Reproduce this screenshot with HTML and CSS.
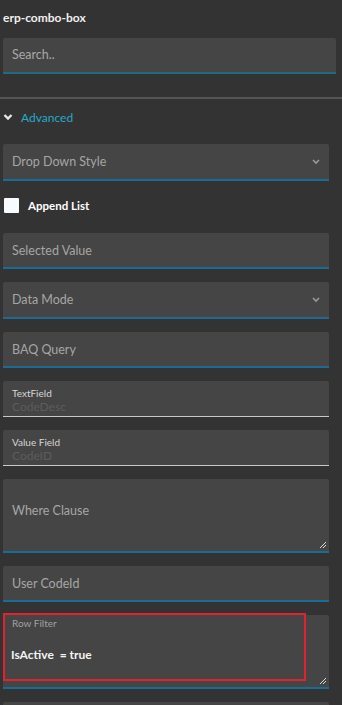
FILE: index.html
```html
<!DOCTYPE html>
<html lang="en">
<head>
    <meta charset="UTF-8">
    <meta name="viewport" content="width=device-width, initial-scale=1.0">
    <title>erp-combo-box</title>
    <link rel="stylesheet" href="styles.css">
</head>
<body>
    <div class="panel-head">
        <div class="panel-title">erp-combo-box</div>
        <div class="search-box">Search..</div>
    </div>
    <div class="divider"></div>

    <div class="section-toggle">
        <svg class="toggle-icon" width="10" height="8" viewBox="0 0 10 8">
            <path d="M1.5 2 L5 5.5 L8.5 2" fill="none" stroke="#e6e6e6" stroke-width="2.4"/>
        </svg>
        <span>Advanced</span>
    </div>

    <div class="props">
        <div class="field select">
            <span class="placeholder">Drop Down Style</span>
            <svg class="chevron" width="10" height="7" viewBox="0 0 10 7">
                <path d="M2 2 L5 5 L8 2" fill="none" stroke="#9a9a9a" stroke-width="1.6"/>
            </svg>
        </div>

        <label class="check-row">
            <span class="check-box"></span>
            <span class="check-label">Append List</span>
        </label>

        <div class="field-list">
            <div class="field"><span class="placeholder">Selected Value</span></div>
            <div class="field select">
                <span class="placeholder">Data Mode</span>
                <svg class="chevron" width="10" height="7" viewBox="0 0 10 7">
                    <path d="M2 2 L5 5 L8 2" fill="none" stroke="#9a9a9a" stroke-width="1.6"/>
                </svg>
            </div>
            <div class="field"><span class="placeholder">BAQ Query</span></div>
            <div class="field labeled">
                <span class="small-label">TextField</span>
                <span class="ghost">CodeDesc</span>
            </div>
            <div class="field labeled">
                <span class="small-label">Value Field</span>
                <span class="ghost">CodeID</span>
            </div>
            <div class="field area">
                <span class="placeholder">Where Clause</span>
                <svg class="grip" width="8" height="8" viewBox="0 0 8 8">
                    <path d="M7 1 L1 7 M7 4 L4 7" stroke="#d8d8d8" stroke-width="1"/>
                </svg>
            </div>
            <div class="field"><span class="placeholder">User CodeId</span></div>
            <div class="field area filled">
                <span class="small-label dim">Row Filter</span>
                <span class="value">IsActive &nbsp;= true</span>
                <svg class="grip" width="8" height="8" viewBox="0 0 8 8">
                    <path d="M7 1 L1 7 M7 4 L4 7" stroke="#d8d8d8" stroke-width="1"/>
                </svg>
                <div class="highlight"></div>
            </div>
            <div class="field"></div>
        </div>
    </div>
</body>
</html>
```

FILE: styles.css
```css
body {
    margin: 0;
    background: #333333;
    font-family: 'Lato', 'Liberation Sans', sans-serif;
    color: #e8e8e8;
    overflow: hidden;
}

.panel-head {
    padding: 10px 6px 0 3px;
}

.panel-title {
    font-size: 12px;
    font-weight: bold;
    line-height: 16px;
    color: #f0f0f0;
}

.search-box {
    margin-top: 12px;
    height: 34px;
    background: #454545;
    border-bottom: 2px solid #206b7c;
    border-radius: 2px 2px 0 0;
    padding-left: 9px;
    font-size: 12.5px;
    line-height: 34px;
    color: #a8a8a8;
}

.divider {
    margin-top: 23px;
    height: 2px;
    background: #555555;
}

.section-toggle {
    display: flex;
    align-items: center;
    gap: 8px;
    padding: 11px 0 0 3px;
    height: 14px;
    font-size: 12px;
    color: #27a9c9;
}

.toggle-icon {
    display: block;
}

.props {
    padding: 20px 13px 0 3px;
}

.field {
    position: relative;
    height: 34px;
    background: #454545;
    border-bottom: 2px solid #1d6a94;
    border-radius: 2px 2px 0 0;
    padding-left: 9px;
    display: flex;
    align-items: center;
    font-size: 12.5px;
}

.field.select {
    height: 35px;
    justify-content: space-between;
    padding-right: 8px;
}

.placeholder {
    color: #a6a6a6;
}

.chevron {
    display: block;
}

.check-row {
    display: flex;
    align-items: center;
    gap: 9px;
    margin: 17px 0 20px 1px;
}

.check-box {
    width: 15px;
    height: 15px;
    background: #f7fbfd;
    border-radius: 1px;
}

.check-label {
    font-size: 11.5px;
    font-weight: bold;
    color: #ffffff;
}

.field-list {
    display: flex;
    flex-direction: column;
    gap: 13px;
}

.field.labeled {
    height: 35px;
    border-bottom: 1px solid #c8c8c8;
    flex-direction: column;
    align-items: flex-start;
    justify-content: flex-start;
    padding-top: 0;
}

.field.labeled .small-label {
    margin-top: 6px;
}

.small-label {
    font-size: 10px;
    line-height: 13px;
    color: #d6d6d6;
}

.small-label.dim {
    color: #a0a0a0;
}

.ghost {
    font-size: 12px;
    line-height: 14px;
    color: #5c5c5c;
}

.field.area {
    height: 72px;
    align-items: flex-start;
}

.field.area .placeholder {
    margin-top: 24px;
}

.field.filled {
    flex-direction: column;
    justify-content: flex-start;
    padding-top: 2px;
    height: 70px;
}

.value {
    margin-top: 17px;
    margin-left: -1px;
    font-size: 12px;
    font-weight: bold;
    color: #f4f4f4;
}

.grip {
    position: absolute;
    right: 2px;
    bottom: 2px;
}

.highlight {
    position: absolute;
    top: -2px;
    left: 0;
    width: 299px;
    height: 64px;
    border: 2.5px solid #e3222f;
}
```
